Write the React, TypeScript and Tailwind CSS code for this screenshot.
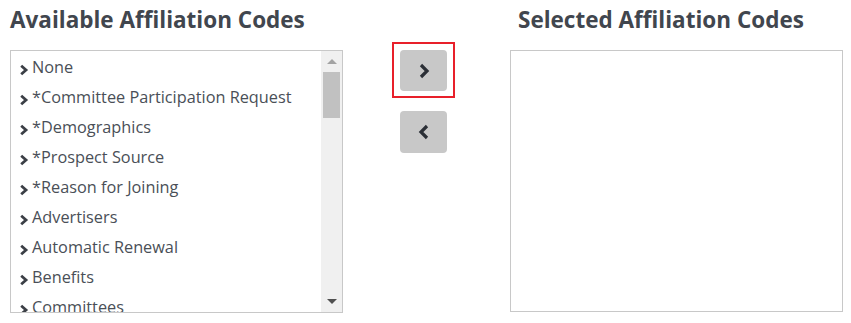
import React from "react";

const items = [
  "None",
  "*Committee Participation Request",
  "*Demographics",
  "*Prospect Source",
  "*Reason for Joining",
  "Advertisers",
  "Automatic Renewal",
  "Benefits",
  "Committees",
];

function Chev({ dir = "right" }: { dir?: "right" | "left" }) {
  return (
    <svg width="12" height="16" viewBox="0 0 12 16" className="shrink-0">
      <path
        d={dir === "right" ? "M3 2 L9 8 L3 14" : "M9 2 L3 8 L9 14"}
        fill="none"
        stroke="#2b2f36"
        strokeWidth="3.2"
        strokeLinejoin="miter"
      />
    </svg>
  );
}

function SmallChev() {
  return (
    <svg width="10" height="12" viewBox="0 0 10 12" className="shrink-0 mt-[5px]">
      <path d="M2.2 1.8 L7 6 L2.2 10.2" fill="none" stroke="#3b3f46" strokeWidth="2.8" />
    </svg>
  );
}

export default function App() {
  return (
    <div
      className="w-[851px] h-[323px] bg-white text-[#4a4f57] flex"
      style={{ fontFamily: '"Open Sans", "Noto Sans", sans-serif' }}
    >
      <div className="ml-[10px] w-[333px] flex flex-col">
        <h2 className="h-[50px] pt-[5px] text-[22.5px] leading-[30px] font-bold text-[#41464e] whitespace-nowrap">
          Available Affiliation Codes
        </h2>
        <div className="h-[263px] border border-[#c8c8c8] flex overflow-hidden">
          <ul className="flex-1 overflow-hidden pl-[8px] pt-[1px]">
            {items.map((t) => (
              <li key={t} className="h-[30px] flex items-center gap-[3px] text-[16.3px] whitespace-nowrap">
                <SmallChev />
                <span>{t}</span>
              </li>
            ))}
          </ul>
          <div className="w-[21px] bg-[#f0f0f0] flex flex-col items-center">
            <div className="h-[21px] w-full flex items-center justify-center">
              <div className="w-0 h-0 border-l-[5px] border-r-[5px] border-b-[5px] border-l-transparent border-r-transparent border-b-[#a3a3a3]" />
            </div>
            <div className="w-[17px] h-[46px] bg-[#c1c1c1]" />
            <div className="flex-1" />
            <div className="h-[22px] w-full flex items-center justify-center">
              <div className="w-0 h-0 border-l-[5px] border-r-[5px] border-t-[5px] border-l-transparent border-r-transparent border-t-[#505050]" />
            </div>
          </div>
        </div>
      </div>

      <div className="w-[167px] flex flex-col items-start pl-[49px] pt-[42px]">
        <div className="border-2 border-[#e8202a] pt-[6px] pb-[5px] px-[6px]">
          <button className="w-[47px] h-[41px] rounded-[4px] bg-[#c8c8c8] flex items-center justify-center">
            <Chev dir="right" />
          </button>
        </div>
        <button className="mt-[13px] ml-[8px] w-[47px] h-[42px] rounded-[4px] bg-[#c8c8c8] flex items-center justify-center">
          <Chev dir="left" />
        </button>
      </div>

      <div className="w-[333px] flex flex-col">
        <h2 className="h-[50px] pt-[5px] pl-[8px] text-[22.5px] leading-[30px] font-bold text-[#41464e] whitespace-nowrap">
          Selected Affiliation Codes
        </h2>
        <div className="h-[262px] border border-[#c8c8c8]" />
      </div>
    </div>
  );
}
